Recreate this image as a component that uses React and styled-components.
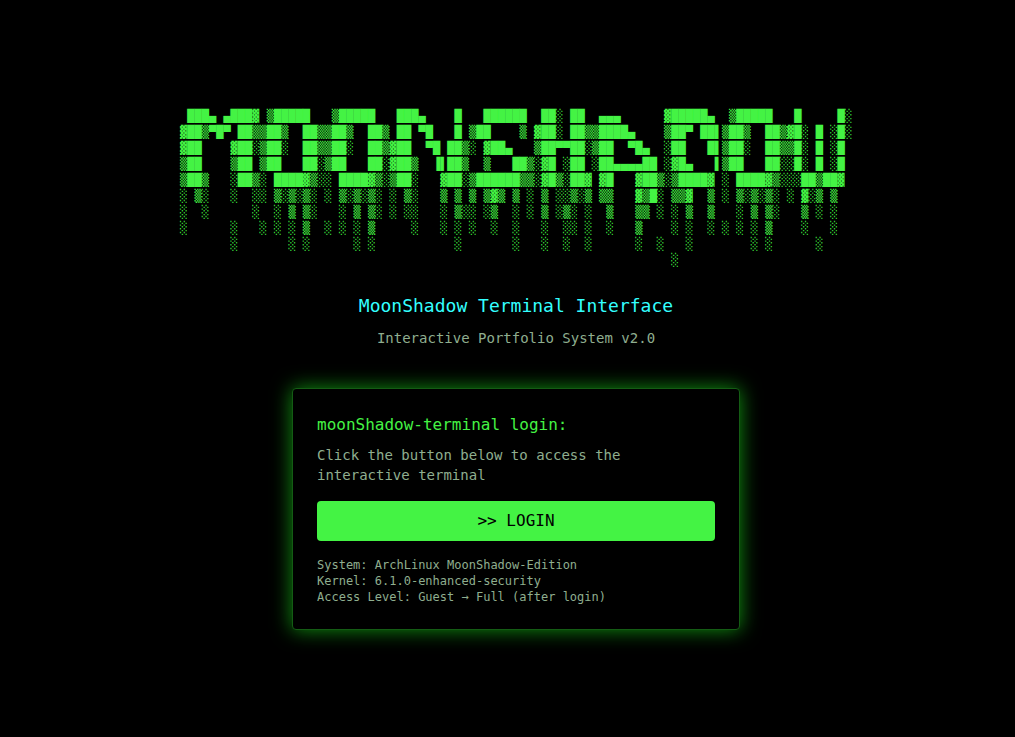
import React from "react";
import styled, { createGlobalStyle } from "styled-components";

const GREEN = "#44f344";
const CYAN = "#33ffff";
const MUTED = "#8fae8f";

const GlobalStyle = createGlobalStyle`
  *, *::before, *::after { box-sizing: border-box; }
  body {
    margin: 0;
    background: #000;
    font-family: "DejaVu Sans Mono", "Liberation Mono", monospace;
  }
  h1, h2, p, pre { margin: 0; }
`;

const Page = styled.main`
  min-height: 100vh;
  padding: 1px 0 0 17px;
  display: flex;
  flex-direction: column;
  align-items: center;
  justify-content: center;
  background: #000;
`;

const Banner = styled.header`
  display: flex;
  flex-direction: column;
  align-items: center;
  gap: 8px;
  margin-bottom: 40px;
`;

const AsciiArt = styled.pre`
  margin-bottom: 16px;
  font-family: inherit;
  font-size: 12px;
  line-height: 16px;
  color: ${GREEN};
`;

const Title = styled.h1`
  font-size: 18px;
  line-height: 28px;
  font-weight: 400;
  color: ${CYAN};
`;

const Text = styled.p`
  font-size: ${({ $small }) => ($small ? 12 : 14)}px;
  line-height: ${({ $small }) => ($small ? 16 : 20)}px;
  color: ${MUTED};
`;

const Card = styled.section`
  width: 100%;
  max-width: 448px;
  padding: 24px;
  display: flex;
  flex-direction: column;
  gap: 16px;
  border: 1px solid #145c14;
  border-radius: 4px;
  background: #000;
  box-shadow: 0 0 20px rgba(24, 225, 24, 0.65);
`;

const Prompt = styled.div`
  display: flex;
  flex-direction: column;
  gap: 8px;
`;

const PromptTitle = styled.h2`
  font-size: 16px;
  line-height: 24px;
  font-weight: 400;
  color: ${GREEN};
`;

const LoginButton = styled.button`
  height: 40px;
  border: 0;
  border-radius: 4px;
  background: ${GREEN};
  color: #000;
  font-family: inherit;
  font-size: 16px;
  line-height: 24px;
  cursor: pointer;
`;

const ART = [
  " ███▄ ▄███▓ ▒█████   ▒█████   ███▄    █   ██████  ██░ ██  ▄▄▄      ▓█████▄  ▒█████   █     █░",
  "▓██▒▀█▀ ██▒▒██▒  ██▒▒██▒  ██▒ ██ ▀█   █ ▒██    ▒ ▓██░ ██▒▒████▄    ▒██▀ ██▌▒██▒  ██▒▓█░ █ ░█░",
  "▓██    ▓██░▒██░  ██▒▒██░  ██▒▓██  ▀█ ██▒░ ▓██▄   ▒██▀▀██░▒██  ▀█▄  ░██   █▌▒██░  ██▒▒█░ █ ░█ ",
  "▒██    ▒██ ▒██   ██░▒██   ██░▓██▒  ▐▌██▒  ▒   ██▒░▓█ ░██ ░██▄▄▄▄██ ░▓█▄   ▌▒██   ██░░█░ █ ░█ ",
  "▒██▒   ░██▒░ ████▓▒░░ ████▓▒░▒██░   ▓██░▒██████▒▒░▓█▒░██▓ ▓█   ▓██▒░▒████▓ ░ ████▓▒░░░██▒██▓ ",
  "░ ▒░   ░  ░░ ▒░▒░▒░ ░ ▒░▒░▒░ ░ ▒░   ▒ ▒ ▒ ▒▓▒ ▒ ░ ▒ ░░▒░▒ ▒▒   ▓▒█░ ▒▒▓  ▒ ░ ▒░▒░▒░ ░ ▓░▒ ▒  ",
  "░  ░      ░  ░ ▒ ▒░   ░ ▒ ▒░ ░ ░░   ░ ▒░░ ░▒  ░ ░ ▒ ░▒░ ░  ▒   ▒▒ ░ ░ ▒  ▒   ░ ▒ ▒░   ▒ ░ ░  ",
  "░      ░   ░ ░ ░ ▒  ░ ░ ░ ▒     ░   ░ ░ ░  ░  ░   ░  ░░ ░  ░   ▒    ░ ░  ░ ░ ░ ░ ▒    ░   ░  ",
  "       ░       ░ ░      ░ ░           ░       ░   ░  ░  ░      ░  ░   ░        ░ ░      ░    ",
  "                                                                    ░                        ",
].join("\n");

const SYSTEM_INFO = [
  "System: ArchLinux MoonShadow-Edition",
  "Kernel: 6.1.0-enhanced-security",
  "Access Level: Guest → Full (after login)",
];

export default function App() {
  return (
    <>
      <GlobalStyle />
      <Page>
        <Banner>
          <AsciiArt>{ART}</AsciiArt>
          <Title>MoonShadow Terminal Interface</Title>
          <Text>Interactive Portfolio System v2.0</Text>
        </Banner>
        <Card>
          <Prompt>
            <PromptTitle>moonShadow-terminal login:</PromptTitle>
            <Text>Click the button below to access the interactive terminal</Text>
          </Prompt>
          <LoginButton type="button">&gt;&gt; LOGIN</LoginButton>
          <div>
            {SYSTEM_INFO.map((line) => (
              <Text $small key={line}>{line}</Text>
            ))}
          </div>
        </Card>
      </Page>
    </>
  );
}
